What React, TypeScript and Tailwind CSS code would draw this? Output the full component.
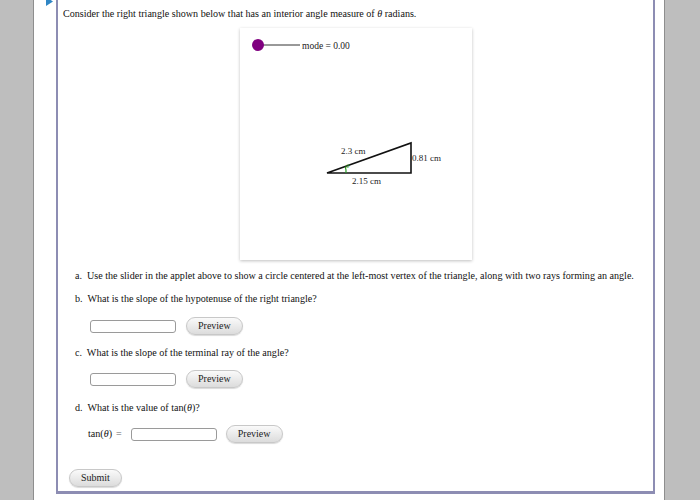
import React from "react";

function PreviewButton({ label = "Preview" }: { label?: string }) {
  return (
    <button className="h-[18px] px-[11px] rounded-full border border-[#c8c8c8] bg-gradient-to-b from-[#fafafa] to-[#dcdcdc] text-[10px] leading-none text-[#222] shadow-[0_1px_1px_rgba(0,0,0,0.15)]">
      {label}
    </button>
  );
}

function AnswerBox({ width = "w-[86px]" }: { width?: string }) {
  return <div className={`${width} h-[13px] rounded-[3px] border border-[#9a9a9a] bg-white`} />;
}

function Applet() {
  return (
    <div className="w-[232px] h-[232px] bg-white shadow-[0_1px_3px_rgba(0,0,0,0.25)]">
      <svg width="232" height="232" viewBox="0 0 232 232">
        <line x1="18" y1="17" x2="60" y2="17" stroke="#333" strokeWidth="1" />
        <circle cx="18" cy="17" r="6" fill="#800080" />
        <text x="62" y="20.5" fontSize="9.5" fontFamily="'Liberation Serif', serif" fill="#222">
          mode = 0.00
        </text>
        <polygon points="87,145 171,145 171,115" fill="none" stroke="#111" strokeWidth="1.6" />
        <path d="M 106 145 A 19 19 0 0 0 105.3 138.6" fill="none" stroke="#2a9d2a" strokeWidth="1.2" />
        <text x="106" y="140" fontSize="7" fontStyle="italic" fontFamily="'Liberation Serif', serif" fill="#2a9d2a">θ</text>
        <text x="101" y="126" fontSize="9" fontFamily="'Liberation Serif', serif" fill="#222">2.3 cm</text>
        <text x="172" y="133" fontSize="9" fontFamily="'Liberation Serif', serif" fill="#222">0.81 cm</text>
        <text x="112" y="156" fontSize="9" fontFamily="'Liberation Serif', serif" fill="#222">2.15 cm</text>
      </svg>
    </div>
  );
}

export default function App() {
  return (
    <div className="w-[700px] h-[500px] overflow-hidden flex bg-[#bebebe] [font-family:'Liberation_Serif',serif] text-[#111]">
      <div className="w-[34px] shrink-0 border-r border-[#8e8e8e]" />
      <div className="flex-1 flex bg-white">
        <div className="w-[22px] shrink-0 relative">
          <svg className="absolute left-[12px] top-[-3px]" width="8" height="9" viewBox="0 0 8 9">
            <polygon points="0,0 7,4.5 0,9" fill="#2f86c5" />
          </svg>
        </div>
        <div className="w-[599px] shrink-0 h-[494px] border-l-2 border-r-2 border-b-[3px] border-[#8d8db3] flex flex-col">
          <p className="pl-[5px] pt-[7px] text-[10.1px] leading-[13px]">
            Consider the right triangle shown below that has an interior angle measure of <i>θ</i> radians.
          </p>
          <div className="flex pl-[182px] pt-[8px]">
            <Applet />
          </div>
          <div className="pl-[17px] pt-[9px] text-[10.1px] leading-[12px]">
            <p className="pt-[1px]">a.&nbsp; Use the slider in the applet above to show a circle centered at the left-most vertex of the triangle, along with two rays forming an angle.</p>
            <p className="pt-[11px]">b.&nbsp; What is the slope of the hypotenuse of the right triangle?</p>
            <div className="flex items-center gap-[10px] pl-[15px] pt-[12px]">
              <AnswerBox />
              <PreviewButton />
            </div>
            <p className="pt-[12px]">c.&nbsp; What is the slope of the terminal ray of the angle?</p>
            <div className="flex items-center gap-[10px] pl-[15px] pt-[11px]">
              <AnswerBox />
              <PreviewButton />
            </div>
            <p className="pt-[14px]">d.&nbsp; What is the value of tan(<i>θ</i>)?</p>
            <div className="flex items-center gap-[9px] pl-[13px] pt-[11px]">
              <span className="flex items-center gap-[4px]">
                <span>tan(<i>θ</i>)</span>
                <span className="text-[#666]">=</span>
              </span>
              <AnswerBox />
              <PreviewButton />
            </div>
          </div>
          <div className="pl-[11px] pt-[21px]">
            <PreviewButton label="Submit" />
          </div>
        </div>
        <div className="flex-1 border-r border-[#8e8e8e]" />
      </div>
      <div className="w-[35px] shrink-0" />
    </div>
  );
}
